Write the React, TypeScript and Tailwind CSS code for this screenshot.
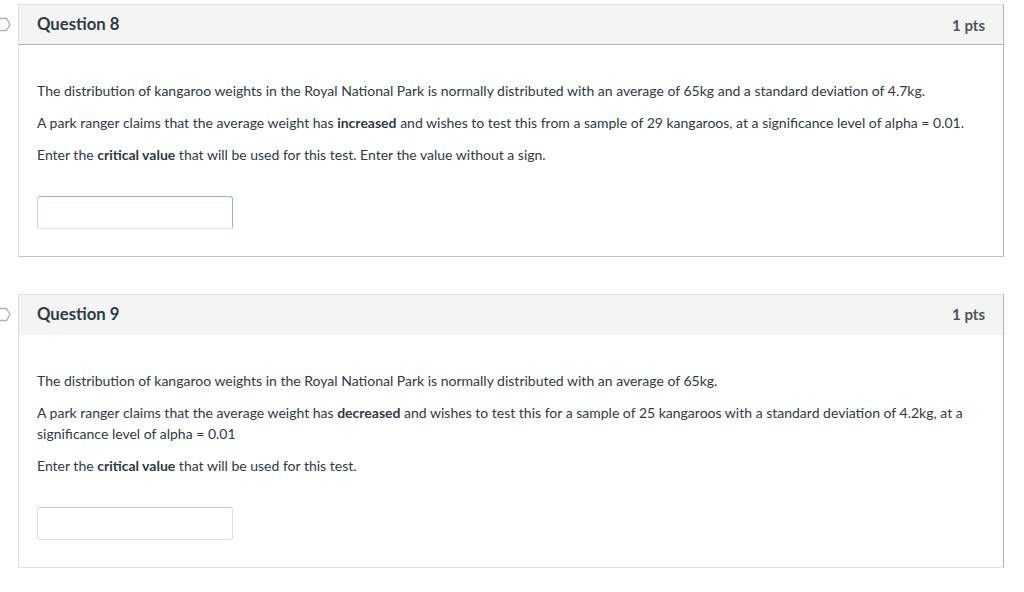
const Flag = () => (
  <svg className="absolute -left-[19px] top-[12px]" width="11" height="15" viewBox="0 0 11 15" fill="none">
    <path d="M-4 1.5H6.5L10 7.5L6.5 13.5H-4" stroke="#9fb2c4" strokeWidth="1.3" fill="#fff" />
  </svg>
);

type CardProps = {
  title: string;
  active?: boolean;
  heavy?: boolean;
  children: React.ReactNode;
};

function QuestionCard({ title, active, heavy, children }: CardProps) {
  return (
    <section className={`relative ml-[18px] w-[986px] border border-t-[#e2e2e2] border-l-[#dedede] ${heavy ? "border-r-[#b4b4b4] border-b-[#c4c4c4]" : "border-r-[#b4b4b4] border-b-[#e2e2e2]"}`}>
      <Flag />
      <header className={`flex h-[40px] items-center justify-between bg-[#f4f4f4] pr-[18px] pl-[18px] ${heavy ? "border-b border-[#b4b4b4] pt-[1px]" : "pb-[1px]"}`}>
        <h2 className="text-[16.7px] font-bold text-[#2d3b45]">{title}</h2>
        <span className="text-[15px] font-bold text-[#4a5660]">1 pts</span>
      </header>
      <div className="px-[18px] pt-[35px] pb-[27px] text-[14px] leading-[21px] text-[#2d3b45]">
        <div className="flex flex-col gap-[11px]">{children}</div>
        <div className={`mt-[31px] h-[33px] w-[196px] rounded-[3px] border ${active ? "border-[#8eb0e8] border-b-[#dbe6f8] border-l-[#c3d5f3]" : "border-[#dedede] border-t-[#c8c8c8]"}`} />
      </div>
    </section>
  );
}

export default function App() {
  return (
    <div className="h-[592px] w-[1024px] overflow-hidden bg-white pt-[4px] font-['Lato','Open_Sans',sans-serif]">
      <QuestionCard title="Question 8" active heavy>
        <p>The distribution of kangaroo weights in the Royal National Park is normally distributed with an average of 65kg and a standard deviation of 4.7kg.</p>
        <p>A park ranger claims that the average weight has <strong>increased</strong> and wishes to test this from a sample of 29 kangaroos, at a significance level of alpha = 0.01.</p>
        <p>Enter the <strong>critical value</strong> that will be used for this test. Enter the value without a sign.</p>
      </QuestionCard>
      <div className="h-[37px]" />
      <QuestionCard title="Question 9">
        <p>The distribution of kangaroo weights in the Royal National Park is normally distributed with an average of 65kg.</p>
        <p>A park ranger claims that the average weight has <strong>decreased</strong> and wishes to test this for a sample of 25 kangaroos with a standard deviation of 4.2kg, at a significance level of alpha = 0.01</p>
        <p>Enter the <strong>critical value</strong> that will be used for this test.</p>
      </QuestionCard>
    </div>
  );
}
